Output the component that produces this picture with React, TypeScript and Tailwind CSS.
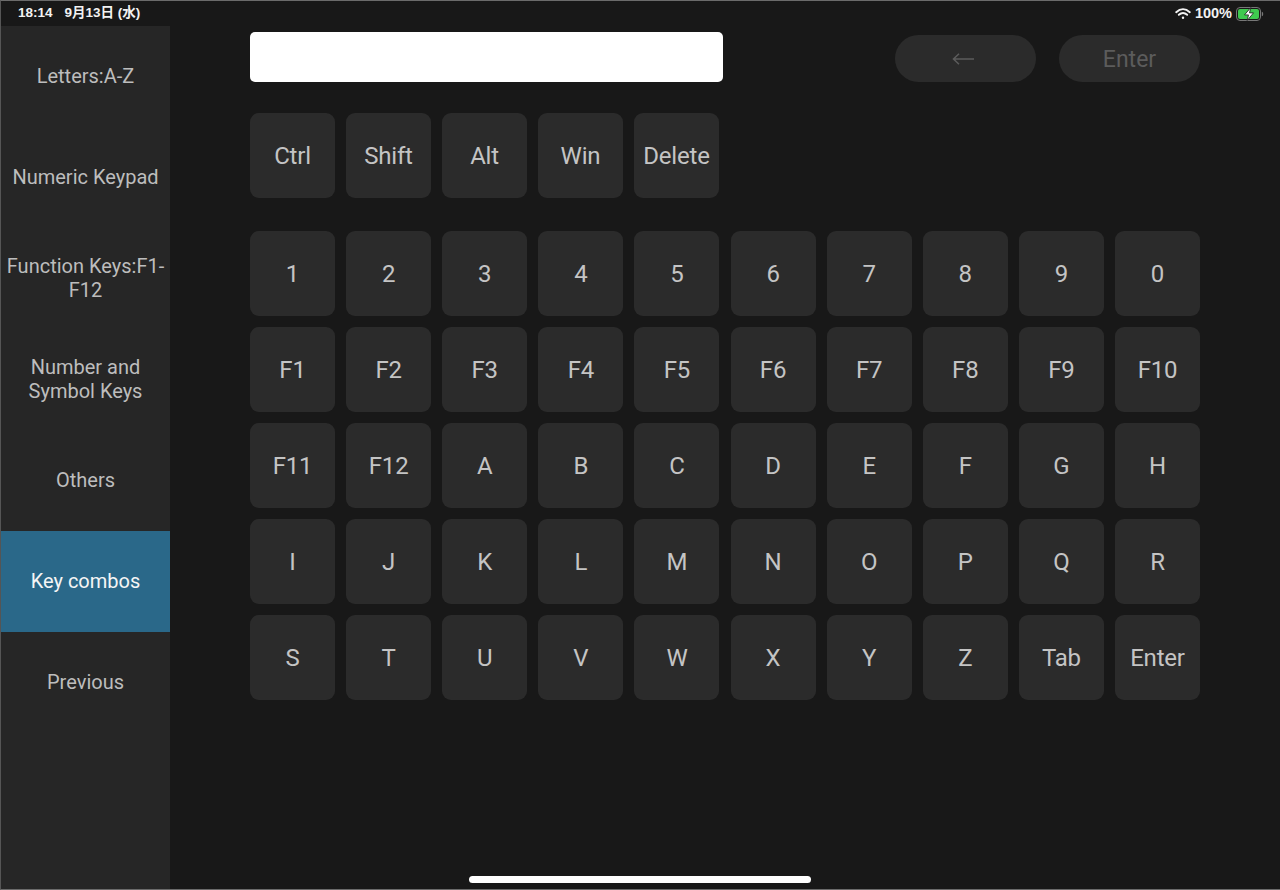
const sideItems = [
  "Letters:A-Z",
  "Numeric Keypad",
  "Function Keys:F1-F12",
  "Number and Symbol Keys",
  "Others",
  "Key combos",
  "Previous",
];

const modifierKeys = ["Ctrl", "Shift", "Alt", "Win", "Delete"];

const keys = [
  "1", "2", "3", "4", "5", "6", "7", "8", "9", "0",
  "F1", "F2", "F3", "F4", "F5", "F6", "F7", "F8", "F9", "F10",
  "F11", "F12", "A", "B", "C", "D", "E", "F", "G", "H",
  "I", "J", "K", "L", "M", "N", "O", "P", "Q", "R",
  "S", "T", "U", "V", "W", "X", "Y", "Z", "Tab", "Enter",
];

function Key({ label }: { label: string }) {
  return (
    <div className="flex h-[85px] w-[85px] items-center justify-center rounded-[9px] bg-[#2b2b2b] pt-[1px] text-[24px] tracking-[-0.2px] text-[#c4c4c4]">
      {label}
    </div>
  );
}

function StatusBar() {
  return (
    <div className="flex h-[25px] items-center justify-between pl-[17px] pr-[16px] font-['Liberation_Sans','Noto_Sans_CJK_JP',sans-serif] text-[13.5px] font-bold text-[#f2f2f2]">
      <div className="flex gap-[12px]">
        <span>18:14</span>
        <span>9月13日 (水)</span>
      </div>
      <div className="flex items-center gap-[4px]">
        <svg width="16" height="12" viewBox="0 0 16 12" fill="none" stroke="#f2f2f2" strokeLinecap="round" strokeWidth="1.9">
          <path d="M1.2 4.2C5.4.2 10.6.2 14.8 4.2" />
          <path d="M3.8 6.8C6.4 4.5 9.6 4.5 12.2 6.8" />
          <circle cx="8" cy="9.8" r="1.2" fill="#f2f2f2" stroke="none" />
        </svg>
        <span className="text-[14.5px]">100%</span>
        <svg width="28" height="14" viewBox="0 0 28 14" fill="none">
          <rect x="0.5" y="0.5" width="24" height="13" rx="3.5" stroke="#777" />
          <rect x="2" y="2" width="21" height="10" rx="2" fill="#3fc94f" />
          <path d="M25.8 4.8c1 .3 1.4 1.1 1.4 2.2s-.4 1.900-1.400 2.200z" fill="#777" />
          <path d="M14.800 0.500 8.500 7.900h4l-1.300 5.600 6.300-7.600h-4z" fill="#fff" stroke="#1b1b1b" strokeWidth="0.8" />
        </svg>
      </div>
    </div>
  );
}

export default function App() {
  return (
    <div className="relative flex h-[890px] w-[1280px] flex-col overflow-hidden border-t border-b border-l border-t-[#6b6b6b] border-b-[#6b6b6b] border-l-[#555] bg-[#181818] font-['Roboto',sans-serif]">
      <StatusBar />
      <div className="flex flex-1">
        <div className="flex w-[169px] flex-col bg-[#262626]">
          {sideItems.map((item) => (
            <div
              key={item}
              className={
                item === "Key combos"
                  ? "flex h-[101px] items-center justify-center bg-[#2a6889] px-[4px] pb-[1px] text-center text-[20px] leading-[24px] text-[#f5f5f5]"
                  : "flex h-[101px] items-center justify-center px-[4px] pb-[1px] text-center text-[20px] leading-[24px] text-[#bdbdbd]"
              }
            >
              {item}
            </div>
          ))}
        </div>
        <div className="flex flex-1 flex-col pl-[80px] pt-[6px]">
          <div className="flex w-[950px] items-end justify-between">
            <div className="h-[50px] w-[473px] rounded-[5px] bg-white" />
            <div className="flex gap-[23px]">
              <div className="flex h-[47px] w-[141px] items-center justify-center rounded-full bg-[#2b2b2b] pr-[4px] text-[23px] text-[#5c5c5c]">
                <svg width="23" height="12" viewBox="0 0 23 12" fill="none" stroke="#5c5c5c" strokeWidth="1.5">
                  <path d="M22 6H1.500M7 .8 1.500 6 7 11.200" />
                </svg>
              </div>
              <div className="flex h-[47px] w-[141px] items-center justify-center rounded-full bg-[#2b2b2b] pt-[4px] text-[23px] text-[#5c5c5c]">
                Enter
              </div>
            </div>
          </div>
          <div className="mt-[31px] flex gap-[11px]">
            {modifierKeys.map((k) => (
              <Key key={k} label={k} />
            ))}
          </div>
          <div className="mt-[33px] grid w-[950px] grid-cols-[repeat(10,85px)] gap-x-[11.11px] gap-y-[11px]">
            {keys.map((k, i) => (
              <Key key={i} label={k} />
            ))}
          </div>
        </div>
      </div>
      <div className="absolute bottom-[6px] left-[468px] h-[7px] w-[342px] rounded-full bg-white" />
    </div>
  );
}
